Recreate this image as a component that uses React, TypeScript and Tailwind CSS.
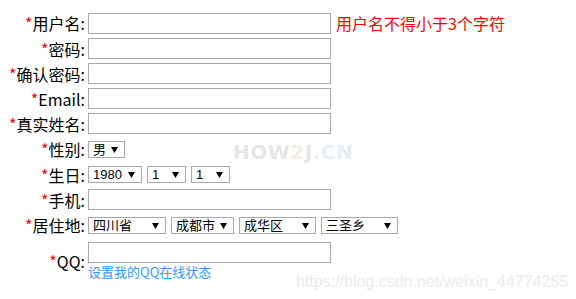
import type { ReactNode } from "react";

const cjk = "font-['Microsoft_YaHei','Noto_Sans_CJK_SC',sans-serif]";

function Star() {
  return <span className="text-[#ff0000]">*</span>;
}

function Row({ label, h, children }: { label: string; h: string; children: ReactNode }) {
  return (
    <div className={`flex items-center ${h}`}>
      <div className="w-[85px] shrink-0 text-right text-[16px] leading-[20px] text-black">
        <Star />
        {label}:
      </div>
      <div className="ml-[3px] flex items-center">{children}</div>
    </div>
  );
}

function TextBox() {
  return <input className="h-[21px] w-[243px] border border-[#a9a9a9] bg-white px-1 outline-none" />;
}

function Select({ w, value }: { w: string; value: string }) {
  return (
    <div className={`relative mr-[5px] flex h-[17px] items-center border border-[#a9a9a9] bg-white pl-[4px] ${w}`}>
      <span className="font-['Liberation_Sans','Noto_Sans_CJK_SC',sans-serif] text-[13px] leading-[15px] text-black">
        {value}
      </span>
      <svg className="absolute right-[6px] top-[5px]" width="7" height="6" viewBox="0 0 7 6">
        <path d="M0 0 H7 L3.5 6 Z" fill="#000" />
      </svg>
    </div>
  );
}

export default function App() {
  return (
    <div className={`relative h-[299px] w-[576px] overflow-hidden bg-white pt-[10px] ${cjk}`}>
      <Row label="用户名" h="h-[26px]">
        <TextBox />
        <span className="ml-[5px] text-[16px] leading-[20px] text-[#ff0000]">用户名不得小于3个字符</span>
      </Row>
      <Row label="密码" h="h-[25px]">
        <TextBox />
      </Row>
      <Row label="确认密码" h="h-[25px]">
        <TextBox />
      </Row>
      <Row label="Email" h="h-[25px]">
        <TextBox />
      </Row>
      <Row label="真实姓名" h="h-[25px]">
        <TextBox />
      </Row>
      <Row label="性别" h="h-[26px]">
        <Select w="w-[37px]" value="男" />
      </Row>
      <Row label="生日" h="h-[25px]">
        <Select w="w-[54px]" value="1980" />
        <Select w="w-[39px]" value="1" />
        <Select w="w-[39px]" value="1" />
      </Row>
      <Row label="手机" h="h-[25px]">
        <TextBox />
      </Row>
      <Row label="居住地" h="h-[26px]">
        <Select w="w-[78px]" value="四川省" />
        <Select w="w-[63px]" value="成都市" />
        <Select w="w-[77px]" value="成华区" />
        <Select w="w-[77px]" value="三圣乡" />
      </Row>
      <div className="flex items-center pt-[4px]">
        <div className="w-[85px] shrink-0 text-right text-[16px] leading-[20px] text-black">
          <Star />
          QQ:
        </div>
        <div className="ml-[3px] flex flex-col">
          <TextBox />
          <a className="text-[13px] leading-[17px] text-[#3399ff]">设置我的QQ在线状态</a>
        </div>
      </div>

      <div className="pointer-events-none absolute left-[233px] top-[137px] font-['DejaVu_Sans',sans-serif] text-[20px] font-bold tracking-[0.5px]">
        <span className="text-[#e6e6e6]">HOW</span>
        <span className="text-[#f1ebe3]">2</span>
        <span className="text-[#e6e6e6]">J</span>
        <span className="text-[#e6eef8]">.CN</span>
      </div>
      <div className="pointer-events-none absolute left-[296px] top-[272px] font-['Liberation_Sans',sans-serif] text-[16px] leading-[20px] text-[#ebebeb]">
        https://blog.csdn.net/weixin_44774255
      </div>
    </div>
  );
}
